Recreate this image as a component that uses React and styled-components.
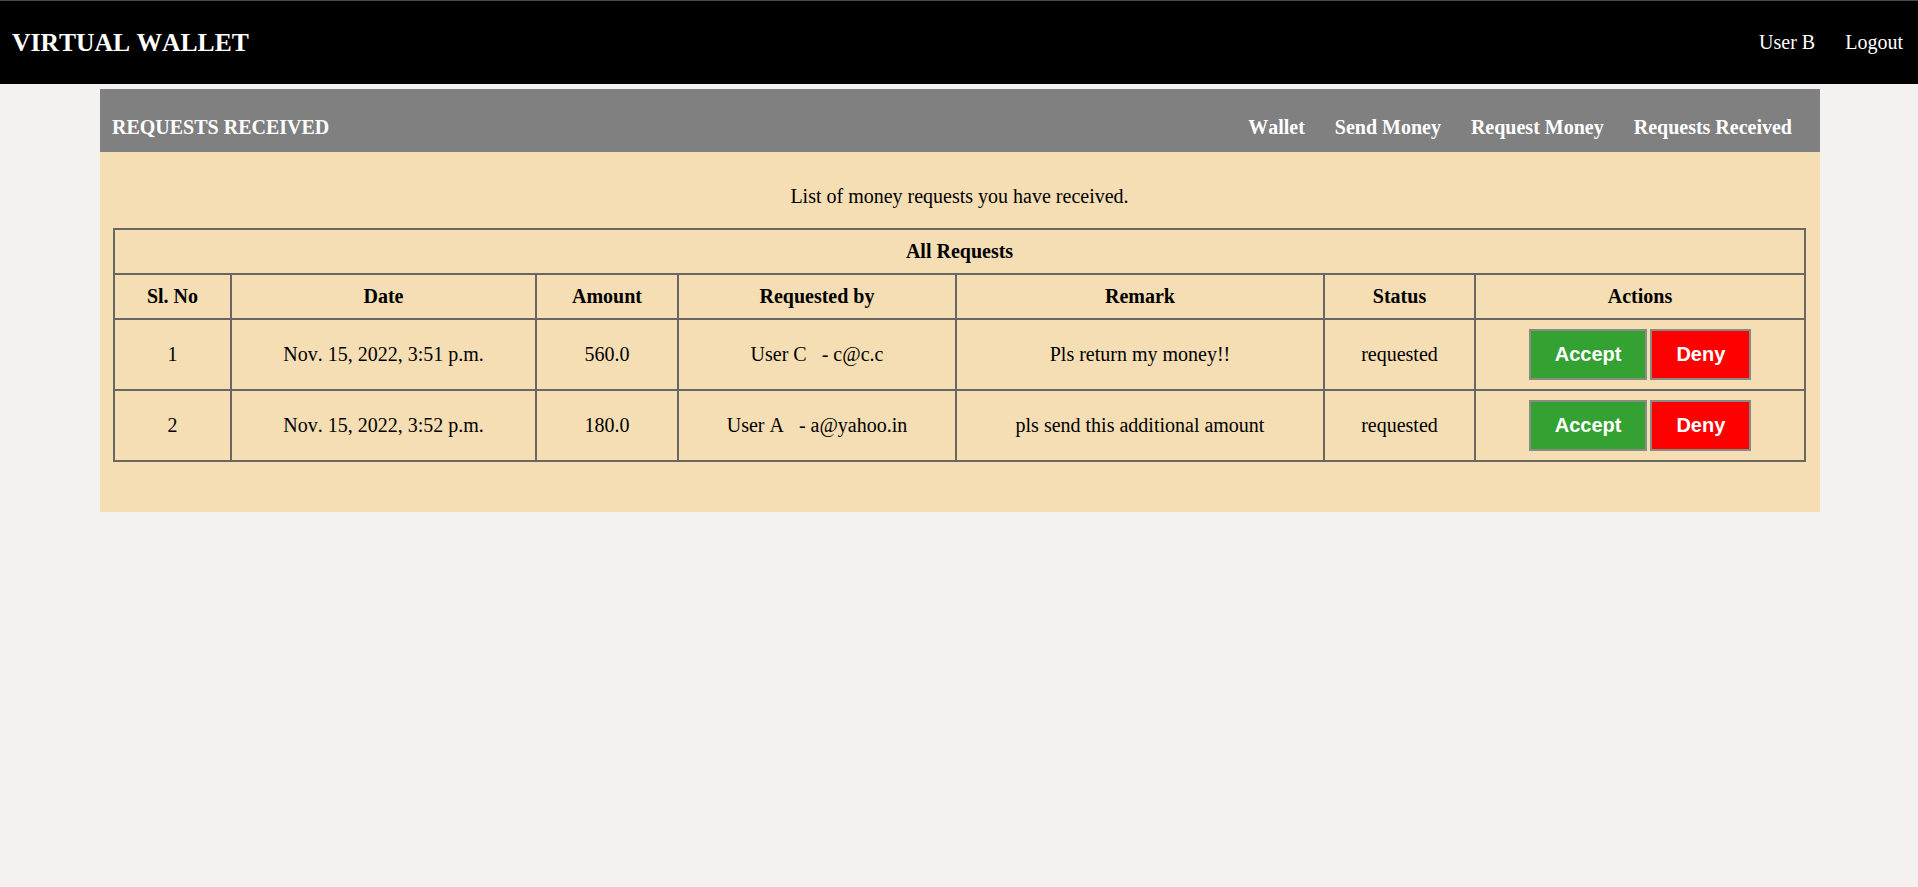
import React from "react";
import styled, { createGlobalStyle } from "styled-components";

const GlobalStyle = createGlobalStyle`
  html, body {
    margin: 0;
    padding: 0;
  }
  body {
    background: #f4f1f0;
    font-family: "Liberation Serif", "Times New Roman", serif;
    font-size: 20px;
    font-kerning: none;
    color: #000;
  }
`;

const TopBar = styled.header`
  display: flex;
  align-items: center;
  justify-content: space-between;
  height: 83px;
  padding: 0 15px 0 12px;
  background: #000;
  border-top: 1px solid #4a4a4a;
  color: #fff;
`;

const Brand = styled.div`
  font-size: 25.6px;
  font-weight: bold;
  line-height: 30px;
`;

const UserNav = styled.nav`
  display: flex;
  gap: 30px;
`;

const UserLink = styled.a`
  color: #fff;
  text-decoration: none;
  font-size: 20px;
  line-height: 23px;
`;

const Panel = styled.main`
  width: 1720px;
  margin: 5px 0 0 100px;
`;

const PanelBar = styled.div`
  display: flex;
  align-items: flex-end;
  justify-content: space-between;
  height: 63px;
  box-sizing: border-box;
  padding: 0 28px 13px 12px;
  background: #808080;
  color: #fff;
  font-weight: bold;
  line-height: 23px;
`;

const PanelTitle = styled.div`
  text-transform: uppercase;
`;

const PanelNav = styled.nav`
  display: flex;
  gap: 30px;
`;

const PanelLink = styled.a`
  color: #fff;
  text-decoration: none;
  font-weight: bold;
`;

const PanelBody = styled.section`
  background: #f5deb3;
  padding: 13px 14px 50px 13px;
`;

const Intro = styled.p`
  margin: 20px 0;
  text-align: center;
  line-height: 23px;
`;

const Table = styled.table`
  width: 100%;
  border-collapse: collapse;
  table-layout: fixed;
  line-height: 23px;
`;

const HeadCell = styled.th`
  border: 2px solid #696764;
  padding: 10px;
  text-align: center;
  font-weight: bold;
`;

const Cell = styled.td`
  border: 2px solid #696764;
  padding: 9px 10px;
  text-align: center;
  white-space: pre;
`;

const Actions = styled.div`
  display: flex;
  justify-content: center;
  gap: 3px;
`;

const ActionButton = styled.button`
  font-family: "Liberation Sans", Arial, sans-serif;
  font-size: 20px;
  font-weight: bold;
  line-height: 23px;
  color: #fff;
  padding: 12px 24px;
  border: 2px solid #8a8a84;
  background: ${(p) => (p.$variant === "accept" ? "#33a233" : "#ff0000")};
  cursor: pointer;
`;

const columns = [117, 305, 142, 278, 368, 151, null];

const requests = [
  {
    id: 1,
    date: "Nov. 15, 2022, 3:51 p.m.",
    amount: "560.0",
    by: "User C\u00a0\u00a0\u00a0- c@c.c",
    remark: "Pls return my money!!",
    status: "requested",
  },
  {
    id: 2,
    date: "Nov. 15, 2022, 3:52 p.m.",
    amount: "180.0",
    by: "User A\u00a0\u00a0\u00a0- a@yahoo.in",
    remark: "pls send this additional amount",
    status: "requested",
  },
];

export default function App() {
  return (
    <>
      <GlobalStyle />
      <TopBar>
        <Brand>VIRTUAL WALLET</Brand>
        <UserNav>
          <UserLink href="#">User B</UserLink>
          <UserLink href="#">Logout</UserLink>
        </UserNav>
      </TopBar>
      <Panel>
        <PanelBar>
          <PanelTitle>Requests Received</PanelTitle>
          <PanelNav>
            <PanelLink href="#">Wallet</PanelLink>
            <PanelLink href="#">Send Money</PanelLink>
            <PanelLink href="#">Request Money</PanelLink>
            <PanelLink href="#">Requests Received</PanelLink>
          </PanelNav>
        </PanelBar>
        <PanelBody>
          <Intro>List of money requests you have received.</Intro>
          <Table>
            <colgroup>
              {columns.map((w, i) => (
                <col key={i} style={w ? { width: `${w}px` } : undefined} />
              ))}
            </colgroup>
            <thead>
              <tr>
                <HeadCell colSpan={7}>All Requests</HeadCell>
              </tr>
              <tr>
                <HeadCell>Sl. No</HeadCell>
                <HeadCell>Date</HeadCell>
                <HeadCell>Amount</HeadCell>
                <HeadCell>Requested by</HeadCell>
                <HeadCell>Remark</HeadCell>
                <HeadCell>Status</HeadCell>
                <HeadCell>Actions</HeadCell>
              </tr>
            </thead>
            <tbody>
              {requests.map((r) => (
                <tr key={r.id}>
                  <Cell>{r.id}</Cell>
                  <Cell>{r.date}</Cell>
                  <Cell>{r.amount}</Cell>
                  <Cell>{r.by}</Cell>
                  <Cell>{r.remark}</Cell>
                  <Cell>{r.status}</Cell>
                  <Cell>
                    <Actions>
                      <ActionButton $variant="accept">Accept</ActionButton>
                      <ActionButton $variant="deny">Deny</ActionButton>
                    </Actions>
                  </Cell>
                </tr>
              ))}
            </tbody>
          </Table>
        </PanelBody>
      </Panel>
    </>
  );
}
